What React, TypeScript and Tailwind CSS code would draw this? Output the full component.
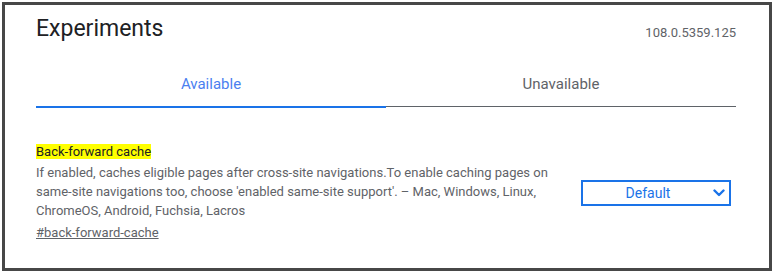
import React from "react";

export default function App() {
  return (
    <div className="w-[773px] h-[273px] bg-white pt-[2px] pl-[2px]" style={{ fontFamily: "Roboto, 'Liberation Sans', sans-serif" }}>
      <div className="w-[770px] h-[269px] border-[3px] border-[#474747] bg-white pl-[31px] pr-[33px] pt-[7px]">
        <div className="flex items-start justify-between">
          <h1 className="mt-[3px] text-[23px] leading-[28px] text-[#202124] font-normal">Experiments</h1>
          <div className="mt-[13px] text-[13px] leading-4 text-[#5f6368]">108.0.5359.125</div>
        </div>
        <div className="flex border-b border-[#5f6368]">
          <div className="flex-1 text-center pt-[31px] pb-[12px] text-[15px] leading-5 text-[#4b7ff0] border-b-2 border-[#1a73e8] -mb-[2px]">
            Available
          </div>
          <div className="flex-1 text-center pt-[31px] pb-[12px] text-[15px] leading-5 text-[#5f6368]">
            Unavailable
          </div>
        </div>
        <div className="flex items-center mt-[37px]">
          <div className="w-[530px]">
            <div className="text-[13px] leading-4 text-[#202124]">
              <span className="bg-[#ffff00]">Back-forward cache</span>
            </div>
            <p className="mt-[3px] text-[13px] leading-[19px] text-[#5f6368]">
              If enabled, caches eligible pages after cross-site navigations.To enable caching pages on same-site navigations too, choose 'enabled same-site support'. – Mac, Windows, Linux, ChromeOS, Android, Fuchsia, Lacros
            </p>
            <a className="block mt-[3px] text-[13px] leading-[19px] text-[#5f6368] underline">#back-forward-cache</a>
          </div>
          <div className="ml-auto mr-[5px] w-[150px] h-[26px] border-2 border-[#1a73e8] flex items-center pl-[10px] pr-[4px]">
            <span className="flex-1 text-center text-[14px] text-[#1a73e8] pr-[8px]">Default</span>
            <svg width="12" height="8" viewBox="0 0 12 8" className="ml-[2px]">
              <path d="M1.5 1.5 L6 6 L10.5 1.5" fill="none" stroke="#1a73e8" strokeWidth="2.4" strokeLinecap="round" strokeLinejoin="round" />
            </svg>
          </div>
        </div>
      </div>
    </div>
  );
}
